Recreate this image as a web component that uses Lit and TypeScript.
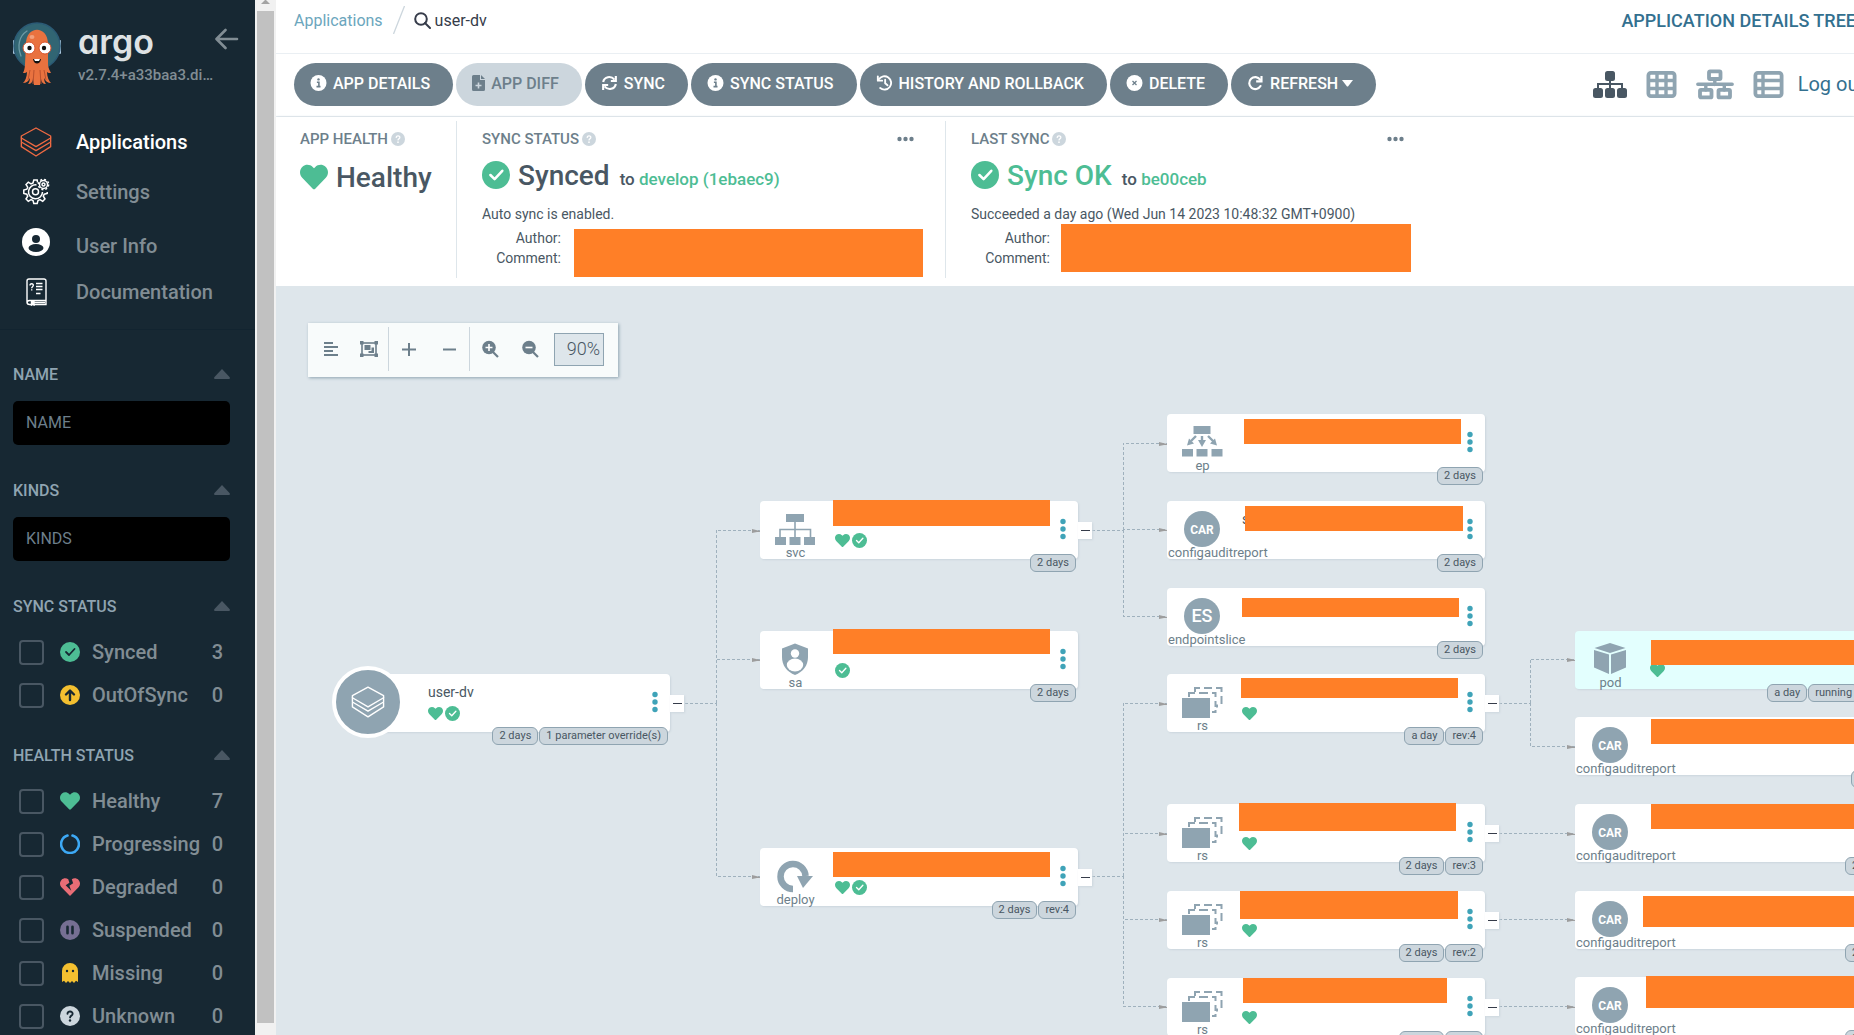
import { LitElement, html, css, svg, nothing } from "lit";
import { customElement } from "lit/decorators.js";
import { styleMap } from "lit/directives/style-map.js";

interface Cover { x: number; y: number; w: number; h: number; }
interface TreeNode {
  id: string; kind: string; icon: string; x: number; y: number;
  title?: string; health?: boolean; synced?: boolean; expandable?: boolean;
  live?: boolean; tags: string[]; cover?: Cover;
}

const NODES: TreeNode[] = [
  { id: "svc", kind: "svc", icon: "svc", x: 484, y: 215, health: true, synced: true, expandable: true, tags: ["2 days"], cover: { x: 73, y: -1, w: 217, h: 26 } },
  { id: "sa", kind: "sa", icon: "sa", x: 484, y: 345, synced: true, tags: ["2 days"], cover: { x: 73, y: -2, w: 217, h: 25 } },
  { id: "deploy", kind: "deploy", icon: "deploy", x: 484, y: 562, health: true, synced: true, expandable: true, tags: ["2 days", "rev:4"], cover: { x: 73, y: 4, w: 217, h: 25 } },
  { id: "ep", kind: "ep", icon: "ep", x: 891, y: 128, tags: ["2 days"], cover: { x: 77, y: 5, w: 217, h: 25 } },
  { id: "car", kind: "configauditreport", icon: "CAR", x: 891, y: 215, title: "s", tags: ["2 days"], cover: { x: 78, y: 5, w: 218, h: 25 } },
  { id: "es", kind: "endpointslice", icon: "ES", x: 891, y: 302, tags: ["2 days"], cover: { x: 75, y: 10, w: 217, h: 19 } },
  { id: "rs4", kind: "rs", icon: "rs", x: 891, y: 388, health: true, expandable: true, tags: ["a day", "rev:4"], cover: { x: 74, y: 4, w: 217, h: 20 } },
  { id: "rs3", kind: "rs", icon: "rs", x: 891, y: 518, health: true, expandable: true, tags: ["2 days", "rev:3"], cover: { x: 72, y: -1, w: 217, h: 28 } },
  { id: "rs2", kind: "rs", icon: "rs", x: 891, y: 605, health: true, expandable: true, tags: ["2 days", "rev:2"], cover: { x: 73, y: 0, w: 218, h: 28 } },
  { id: "rs1", kind: "rs", icon: "rs", x: 891, y: 692, health: true, expandable: true, tags: ["2 days", "rev:1"], cover: { x: 76, y: 0, w: 204, h: 25 } },
  { id: "pod", kind: "pod", icon: "pod", x: 1299, y: 345, live: true, health: true, tags: ["a day", "running", "1/1"], cover: { x: 76, y: 9, w: 217, h: 25 } },
  { id: "car4", kind: "configauditreport", icon: "CAR", x: 1299, y: 431, tags: ["a day"], cover: { x: 76, y: 2, w: 217, h: 25 } },
  { id: "car3", kind: "configauditreport", icon: "CAR", x: 1299, y: 518, tags: ["2 days"], cover: { x: 76, y: 0, w: 217, h: 25 } },
  { id: "car2", kind: "configauditreport", icon: "CAR", x: 1299, y: 605, tags: ["2 days"], cover: { x: 68, y: 5, w: 225, h: 31 } },
  { id: "car1", kind: "configauditreport", icon: "CAR", x: 1299, y: 691, tags: ["2 days"], cover: { x: 71, y: -1, w: 222, h: 32 } },
];

/* Each group: where the parent's line leaves, the shared vertical, and the child rows it reaches. */
const EDGES = [
  { from: 409, mid: 440, to: 484, y: 417, rows: [244, 373, 590] },
  { from: 816, mid: 847, to: 891, y: 244, rows: [157, 243, 330] },
  { from: 816, mid: 847, to: 891, y: 590, rows: [417, 547, 633, 720] },
  { from: 1223, mid: 1254, to: 1299, y: 417, rows: [373, 460] },
  { from: 1223, mid: 1254, to: 1299, y: 547, rows: [547] },
  { from: 1223, mid: 1254, to: 1299, y: 633, rows: [633] },
  { from: 1223, mid: 1254, to: 1299, y: 720, rows: [720] },
];

const HEART = "M462 63C407 16 326 24 276 76l-20 21-20-21C186 24 105 16 50 63c-63 53-66 150-10 208l193 199c13 13 33 13 46 0l193-199c56-58 53-155-10-208z";
const BROKEN = "M474 74l-3-3c-46-47-118-51-169-14l34 103-96 64 48 128-144-144 96-64-29-87C160 20 87 24 41 71l-3 3C-10 124-13 203 31 256l212 219c7 7 19 7 26 0l212-219c44-53 41-132-7-182z";

const stroked = (body: unknown, cls = "i20", w = 2) =>
  html`<svg class=${cls} viewBox="0 0 24 24" fill="none" stroke="currentColor" stroke-width=${w} stroke-linecap="round" stroke-linejoin="round" aria-hidden="true">${body}</svg>`;

const heart = (cls: string) => html`<svg class="${cls} green" viewBox="0 0 512 512" aria-hidden="true"><path fill="currentColor" d=${HEART} /></svg>`;
const check = (cls: string, mark: string) => html`<svg class="${cls} green" viewBox="0 0 20 20" aria-hidden="true"><circle cx="10" cy="10" r="10" fill="currentColor" /><path d="M6 10l3 3 5.500-6" fill="none" stroke=${mark} stroke-width="1.800" stroke-linecap="round" stroke-linejoin="round" /></svg>`;

const LAYERS = svg`<path d="M12 1.500L23 7.500v1.500l-11 6.500L1 9V7.500z"/><path d="M1 9v3l11 6.500L23 12V9"/><path d="M1 12.500v3L12 22.500l11-7v-3"/>`;

const statusIcon = (name: string) => {
  const dark = "#172833";
  switch (name) {
    case "Synced": return check("i20", dark);
    case "Healthy": return heart("i20");
    case "OutOfSync": return html`<svg class="i20" viewBox="0 0 20 20"><circle cx="10" cy="10" r="10" fill="#f4c030" /><path d="M10 15V6M6 9.500l4-4 4 4" fill="none" stroke=${dark} stroke-width="2.400" stroke-linecap="round" stroke-linejoin="round" /></svg>`;
    case "Progressing": return html`<svg class="i20" viewBox="0 0 20 20"><path d="M12.500 1.500a8.900 8.900 0 1 1-5 0" fill="none" stroke="#3da9f5" stroke-width="2.600" stroke-linecap="round" /></svg>`;
    case "Degraded": return html`<svg class="i20" viewBox="0 0 512 512"><path fill="#e96d76" d=${BROKEN} /></svg>`;
    case "Suspended": return html`<svg class="i20" viewBox="0 0 20 20"><circle cx="10" cy="10" r="10" fill="#766f94" /><path d="M7.500 6.800v6.400M12.500 6.800v6.400" stroke=${dark} stroke-width="2.600" stroke-linecap="round" /></svg>`;
    case "Missing": return html`<svg class="i20" viewBox="0 0 20 20"><path fill="#f4c030" d="M2 8a8 8 0 0 1 16 0v11l-2-1.200L14 20l-2-2-2 2-2-2-2 2-2-2.200L2 19z" /><circle cx="7" cy="8" r="1.200" fill=${dark} /><circle cx="13" cy="8" r="1.200" fill=${dark} /></svg>`;
    default: return html`<svg class="i20" viewBox="0 0 20 20"><circle cx="10" cy="10" r="10" fill="#ccd6dd" /><path d="M7.500 7.800C7.500 4.500 12.800 4.800 12.600 8c-.1 1.600-2.500 1.700-2.500 3.400" fill="none" stroke=${dark} stroke-width="1.900" stroke-linecap="round" /><circle cx="10" cy="14.500" r="1.200" fill=${dark} /></svg>`;
  }
};

const INFO = html`<svg class="i17" viewBox="0 0 20 20" aria-hidden="true"><circle cx="10" cy="10" r="10" fill="#fff" /><circle cx="10" cy="5.500" r="1.500" fill="#6d7f8b" /><path d="M8 9h2.500v5M7.500 14.500h5" fill="none" stroke="#6d7f8b" stroke-width="2" /></svg>`;
const HELP = html`<svg class="i14" viewBox="0 0 20 20" aria-hidden="true"><circle cx="10" cy="10" r="10" fill="#ccd6dd" /><path d="M7.500 7.800C7.500 4.500 12.800 4.800 12.600 8c-.1 1.600-2.500 1.700-2.500 3.400" fill="none" stroke="#fff" stroke-width="1.800" stroke-linecap="round" /><circle cx="10" cy="14.500" r="1.200" fill="#fff" /></svg>`;

const ACTIONS = [
  { label: "APP DETAILS", icon: INFO },
  { label: "APP DIFF", disabled: true, icon: html`<svg class="i13" viewBox="0 0 13 16" aria-hidden="true"><path fill="currentColor" d="M1.500 0H8v5h5v9.500a1.500 1.500 0 0 1-1.500 1.500h-10A1.500 1.500 0 0 1 0 14.500v-13A1.500 1.500 0 0 1 1.500 0zM9 0l4 4H9z" /><path d="M6.500 7.500v6M3.500 10.500h6" stroke="#ccd6dd" stroke-width="1.600" /></svg>` },
  { label: "SYNC", icon: html`<svg class="i17" viewBox="0 0 24 24" fill="none" stroke="#fff" stroke-width="3.200" aria-hidden="true"><path d="M2.500 10.500C4 2.500 14 .5 19.500 7M21.500 13.500C20 21.500 10 23.500 4.500 17" /><path d="M21.500 1.500V9H14M2.500 22.500V15H10" /></svg>` },
  { label: "SYNC STATUS", icon: INFO },
  { label: "HISTORY AND ROLLBACK", icon: html`<svg class="i17" viewBox="0 0 24 24" fill="none" stroke="#fff" stroke-width="2.800" stroke-linecap="round" stroke-linejoin="round" aria-hidden="true"><path d="M3.500 6.500a10 10 0 1 1 2 13" /><path d="M2 2v6.500h6.500M13 7v5.500l3.500 3" /></svg>` },
  { label: "DELETE", icon: html`<svg class="i17" viewBox="0 0 20 20" aria-hidden="true"><circle cx="10" cy="10" r="10" fill="#fff" /><path d="M7.500 7.500l5 5M12.500 7.500l-5 5" stroke="#6d7f8b" stroke-width="1.600" /></svg>` },
  { label: "REFRESH", caret: true, icon: html`<svg class="i17" viewBox="0 0 24 24" fill="none" stroke="#fff" stroke-width="3.200" aria-hidden="true"><path d="M19.500 16.500A9 9 0 1 1 19 7" stroke-linecap="round" /><path d="M21 1.500V9.500H13" /></svg>` },
];

const kindIcon = (icon: string) => {
  const g = "#8fa4b1";
  switch (icon) {
    case "svc": return html`<svg class="kind-icon" viewBox="0 0 42 34"><g fill=${g}><path d="M12 2h18v8H12zM1 25h11v8H1zM15.500 25h11v8h-11zM30 25h11v8H30z" /></g><path d="M21 10v15M6 25v-7.500h30.500V25" fill="none" stroke=${g} stroke-width="1.600" /></svg>`;
    case "sa": return html`<svg class="kind-icon" viewBox="0 0 42 34"><path fill=${g} d="M21 1.500L34 6.500V15c0 8.500-5 15-13 18-8-3-13-9.500-13-18V6.500z" /><circle cx="21" cy="11.500" r="4.200" fill="#fff" /><ellipse cx="21" cy="23" rx="8.200" ry="6.500" fill="#fff" /></svg>`;
    case "deploy": return html`<svg class="kind-icon" viewBox="0 0 42 34"><path d="M19 30A12.500 12.500 0 1 1 31.500 17" fill="none" stroke=${g} stroke-width="6.500" /><path fill=${g} d="M23 17h16L29 29z" /></svg>`;
    case "ep": return html`<svg class="kind-icon" viewBox="0 0 42 34"><g fill=${g}><path d="M12.500 1h17v8h-17zM1 24h11v7.500H1zM15.500 24h11v7.500h-11zM30.500 24h11v7.500h-11z" /><path d="M21 22l-4-7h8zM6 20.500l2-7 5 5zM36 20.500l-7-2 5-5z" /></g><path d="M21 11v5M15 11l-5 5M27 11l6 6" stroke=${g} stroke-width="2.400" /></svg>`;
    case "rs": return html`<svg class="kind-icon" viewBox="0 0 42 34"><path fill=${g} d="M1 13h28v20H1z" /><g fill="none" stroke=${g} stroke-width="2"><path d="M8 12V8h6M18 8h9M31 8h3.500v4M34.500 16v6M34.500 25v2H31" /><path d="M14 7V3h5M23 3h8M35 3h5.500v4M40.500 11v8M36 22.500v-3" /></g></svg>`;
    case "pod": return html`<svg class="kind-icon" viewBox="0 0 42 34"><g fill=${g}><path d="M21 1l15.500 5L21 11 5.500 6zM5 8l15 4.500V32L5 25.500zM37 8l-15 4.500V32l15-6.500z" /></g></svg>`;
    default: return html`<span class="kind-badge ${icon.length > 2 ? "small" : ""}">${icon}</span>`;
  }
};

@customElement("app-root")
export class AppRoot extends LitElement {
  static styles = css`
    :host { display: block; font-family: Roboto, "Liberation Sans", sans-serif; color: #495763; }
    * { box-sizing: border-box; }
    svg { display: block; flex: none; }
    a { text-decoration: none; color: inherit; }
    button { font: inherit; color: inherit; border: 0; background: none; padding: 0; cursor: pointer; }
    .app { display: flex; height: 100vh; overflow: hidden; background: #fff; }
    .green { color: #4dbd94; }
    .i14 { width: 14px; height: 14px; }
    .i13 { width: 13px; height: 16px; }
    .i17 { width: 17px; height: 16px; }
    .i20 { width: 20px; height: 20px; }
    .i26 { width: 28px; height: 28px; }
    .i30 { width: 32px; height: 32px; }

    .sidebar { width: 255px; flex: none; background: #172833; color: #818d94; overflow: hidden; }
    .brand { display: flex; padding: 20px 16px 0 12px; height: 117px; }
    .squid { width: 50px; height: 66px; }
    .brand-text { flex: 1; min-width: 0; margin-left: 16px; position: relative; }
    .wordmark { font: 600 34px/40px Inter, sans-serif; font-feature-settings: "cv11"; color: #dee2e4; height: 44px; margin-top: 2px; }
    .version { font-size: 15px; font-weight: 500; line-height: 18px; width: 136px; overflow: hidden; text-overflow: ellipsis; white-space: nowrap; }
    .collapse { display: block; height: 24px; margin-top: 7px; margin-left: -60px; position: relative; }
    .nav { display: flex; flex-direction: column; border-bottom: 1px solid #122430; height: 213px; }
    .nav-item { display: grid; grid-template-columns: 32px 1fr; column-gap: 24px; align-items: center; height: 50px; padding-left: 20px; font-size: 20px; font-weight: 500; }
    .nav-item svg { justify-self: center; color: #fff; }
    .nav-item.active { color: #fff; }
    .nav-item.active svg { color: #ef6a42; }
    .nav-item.glyph { align-items: start; padding-top: 11px; }
    .nav-item.glyph span { line-height: 36px; }
    .filters { padding: 32px 25px 0 13px; }
    .filter-head { display: flex; justify-content: space-between; align-items: center; width: 100%; height: 24px; font-size: 16px; font-weight: 500; color: #8fa4b1; }
    .caret { width: 16px; height: 10px; color: #495763; }
    .filter-input { display: block; width: 100%; height: 44px; margin: 15px 0 33px; padding: 0 13px 2px; border: 0; border-radius: 5px; background: #000; color: #8fa4b1; font: 400 16px Roboto, sans-serif; }
    .filter-input::placeholder { color: #6d7f8b; opacity: 1; }
    .checks { padding: 12px 7px 27px 6px; }
    .check { display: flex; align-items: center; height: 43px; font-size: 20px; font-weight: 500; }
    .check input { appearance: none; flex: none; width: 25px; height: 25px; margin: 2px 16px 0 0; border: 2px solid #495763; border-radius: 4px; }
    .check .name { flex: 1; padding-left: 12px; }

    .scrollbar { flex: none; width: 21px; background: #f1f1f1; display: flex; flex-direction: column; align-items: center; gap: 7px; padding-bottom: 12px; }
    .scrollbar svg { width: 9px; height: 4px; }
    .thumb { width: 17px; flex: 1; background: #c1c1c1; }

    .main { flex: 1; min-width: 0; overflow: hidden; display: flex; flex-direction: column; }
    .header, .toolbar { display: flex; align-items: center; justify-content: space-between; flex: none; margin-right: -28px; border-bottom: 1px solid #eaeff3; }
    .header { height: 54px; padding: 0 26px 13px 18px; }
    .crumbs { display: flex; align-items: center; font-size: 16px; color: #363c4a; }
    .crumbs a { color: #6ba6bd; }
    .slash { width: 12px; height: 28px; margin: 0 9px 0 10px; color: #ccd6dd; }
    .crumbs .search { width: 17px; height: 17px; margin-right: 4px; }
    .page-title { font-size: 18px; font-weight: 500; color: #33708f; white-space: nowrap; }
    .toolbar { height: 63px; padding: 0 17px 2px 18px; }
    .actions { display: flex; gap: 3px; }
    .action { display: flex; align-items: center; gap: 6px; height: 43px; padding: 0 23px 2px 16px; border-radius: 22px; background: #6d7f8b; color: #fff; font-size: 16px; font-weight: 500; white-space: nowrap; }
    .action:disabled { background: #ccd6dd; color: #6d7f8b; }
    .action .down { width: 11px; height: 7px; margin-left: -2px; }
    .views { display: flex; align-items: center; color: #8fa4b1; }
    .views button { margin-right: 19px; }
    .views button:nth-child(4) { margin-right: 14px; }
    .views svg { height: 31px; }
    .tree { width: 34px; color: #495763; }
    .grid { width: 31px; }
    .net { width: 38px; }
    .list { width: 31px; }
    .logout { font-size: 20px; color: #33708f; white-space: nowrap; }

    .status { display: flex; flex: none; height: 169px; padding: 4px 0 8px; box-shadow: 0 1px 3px #9fb0ba; position: relative; }
    .panel { position: relative; padding: 8px 31px 0 25px; border-right: 1px solid #dee6eb; }
    .panel:first-child { width: 181px; padding: 8px 0 0 24px; }
    .panel.wide { width: 489px; }
    .panel:last-child { border-right: 0; }
    .panel-title { display: flex; align-items: center; gap: 3px; height: 20px; font-size: 15px; font-weight: 500; color: #6d7f8b; }
    .more { margin-left: auto; width: 17px; height: 20px; }
    .big { display: flex; align-items: center; gap: 8px; height: 36px; margin: 10px 0 9px; font-size: 28px; font-weight: 500; }
    .big.tight { align-items: baseline; }
    .big.tight svg { align-self: flex-start; margin-top: 2px; }
    .rev { font-size: 17px; margin-left: 2px; white-space: nowrap; }
    .note { font-size: 14px; line-height: 20px; white-space: nowrap; }
    .meta { display: grid; grid-template-columns: 79px; margin: 4px 0 0; font-size: 14px; line-height: 20px; text-align: right; }
    .cover { position: absolute; background: #ff7f27; }

    .canvas { position: relative; flex: 1; background: #dee6eb; overflow: hidden; }
    .zoom { position: absolute; left: 32px; top: 37px; display: flex; align-items: center; height: 54px; padding: 0 14px 2px 4px; background: #f8fbfb; box-shadow: 1px 1px 3px #8fa4b1; color: #6d7f8b; }
    .zoom button { width: 40px; display: grid; place-items: center; }
    .zoom .first { width: 38px; }
    .zoom .sep { align-self: stretch; border-left: 1px solid #ccd6dd; margin: 4px 0; }
    .zoom svg { width: 18px; height: 18px; }
    .zoom input { width: 50px; height: 33px; margin-left: 4px; padding: 0 3px 2px; border: 1px solid #8fa4b1; border-radius: 0; background: #dee6eb; color: #495763; font: 300 18px Roboto, sans-serif; text-align: right; }
    .edges { position: absolute; inset: 0; width: 100%; height: 100%; }
    .node { position: absolute; width: 318px; height: 58px; border-radius: 4px; background: #fff; box-shadow: 1px 1px 2px #ccd6dd; font-size: 14px; }
    .node.live { background: #e3fffe; }
    .node.root { width: 302px; }
    .kind { position: absolute; left: 1px; top: 11px; min-width: 69px; display: flex; flex-direction: column; }
    .kind-icon { width: 42px; height: 34px; align-self: flex-start; margin-left: 13px; }
    .kind-badge { width: 36px; height: 36px; margin: -1px 0 -1px 16px; border-radius: 50%; background: #8fa4b1; color: #fff; font-size: 18px; font-weight: 500; line-height: 36px; text-align: center; }
    .kind-badge.small { font-size: 12px; line-height: 38px; font-weight: 700; }
    .kind-label { font-size: 13px; line-height: 14px; color: #6d7f8b; text-align: center; }
    .root-icon { position: absolute; left: -36px; top: -8px; width: 72px; height: 72px; border: 4px solid #fff; border-radius: 50%; background: #8fa4b1; color: #fff; display: grid; place-items: center; }
    .root-icon svg { width: 34px; height: 34px; }
    .body { position: absolute; left: 75px; top: 9px; }
    .root .body { left: 60px; }
    .node-title { height: 22px; line-height: 18px; }
    .marks { display: flex; gap: 2px; height: 16px; align-items: center; }
    .marks svg { width: 15px; height: 15px; }
    .dots { position: absolute; right: 12px; top: 17px; width: 6px; height: 22px; }
    .dots svg { width: 6px; height: 22px; }
    .tags { position: absolute; right: 2px; bottom: -13px; display: flex; gap: 1px; }
    .tag { height: 18px; padding: 0 6px; border: 1px solid #8fa4b1; border-radius: 6px; background: #ccd6dd; color: #495763; font-size: 11px; line-height: 16px; white-space: nowrap; }
    .toggle { position: absolute; left: 100%; top: 21px; width: 14px; height: 17px; background: #fff; box-shadow: 1px 1px 2px #ccd6dd; display: grid; place-items: center; }
    .toggle::before { content: ""; width: 9px; height: 1px; background: #363c4a; }
  `;

  private filterHead(label: string) {
    return html`<button class="filter-head">${label}<svg class="caret" viewBox="0 0 16 10" aria-hidden="true"><path fill="currentColor" d="M8 0l7.500 8c.8 1 .3 2-.8 2H1.300C.2 10-.3 9 .5 8z" /></svg></button>`;
  }

  private checks(rows: [string, number][]) {
    return html`<div class="checks">${rows.map(([name, count]) => html`
      <label class="check"><input type="checkbox" />${statusIcon(name)}<span class="name">${name}</span><span>${count}</span></label>`)}</div>`;
  }

  private cover(c: Cover) {
    return html`<div class="cover" style=${styleMap({ left: `${c.x}px`, top: `${c.y}px`, width: `${c.w}px`, height: `${c.h}px` })}></div>`;
  }

  private nodeParts(n: Partial<TreeNode>) {
    return html`
      <div class="body"><div class="node-title">${n.title ?? nothing}</div>
        <div class="marks">${n.health ? heart("") : nothing}${n.synced ? check("", "#fff") : nothing}</div></div>
      <button class="dots" aria-label="Node actions"><svg viewBox="0 0 6 22"><g fill="#3fa3b8"><circle cx="3" cy="3.500" r="2.700" /><circle cx="3" cy="11" r="2.700" /><circle cx="3" cy="18.500" r="2.700" /></g></svg></button>
      <div class="tags">${n.tags?.map((t) => html`<span class="tag">${t}</span>`)}</div>
      ${n.expandable ? html`<button class="toggle" aria-label="Collapse"></button>` : nothing}
      ${n.cover ? this.cover(n.cover) : nothing}`;
  }

  private more() {
    return html`<button class="more" aria-label="More"><svg width="17" height="20" viewBox="0 0 17 20"><g fill="#6d7f8b"><circle cx="2.500" cy="10" r="2.200" /><circle cx="8.500" cy="10" r="2.200" /><circle cx="14.500" cy="10" r="2.200" /></g></svg></button>`;
  }

  private sidebar() {
    return html`<aside class="sidebar">
      <div class="brand">
        <svg class="squid" viewBox="0 0 50 66" aria-hidden="true">
          <rect x="1" y="20" width="4" height="14" rx="1" fill="#a9c6dd" /><rect x="45" y="20" width="4" height="14" rx="1" fill="#a9c6dd" />
          <circle cx="25" cy="26" r="23" fill="#316573" stroke="#2b5a75" stroke-width="1.500" />
          <path d="M9 36C5 26 7 16 15 11" fill="none" stroke="#6d9aa5" stroke-width="1.300" stroke-linecap="round" />
          <path fill="#e9723f" d="M14 24c0-19 22-19 22 0v20c0 4 2 7 3 9-2 0-3 0-4-1 0 5 2 9 4 11-3 0-6-2-7-5 0 2 1 5 2 6-3 0-5-2-5-6l-1 7c-2 0-2 0-3 0s-2 0-3 0l-1-7c0 4-2 6-5 6 1-1 2-4 2-6-1 3-4 5-7 5 2-2 4-6 4-11-1 1-3 1-4 1 1-2 2-5 2-9z" />
          <path d="M18 50l-2 10M22 50l-1 14M28 50l1 14M32 50l2 10" stroke="#b9502d" stroke-width="1" fill="none" />
          <ellipse cx="20" cy="17" rx="2.500" ry="2" fill="#f1a07c" />
          <circle cx="17" cy="28" r="6" fill="#fff" stroke="#d9522b" /><circle cx="33" cy="28" r="6" fill="#fff" stroke="#d9522b" />
          <circle cx="17.500" cy="28" r="2.200" fill="#111" /><circle cx="32" cy="28" r="2.200" fill="#111" />
          <path d="M21 39h8c-1 6-7 6-8 0z" fill="#111" /><path d="M22 39h6l-1 2h-4z" fill="#fff" />
        </svg>
        <div class="brand-text"><div class="wordmark">argo</div><div class="version">v2.7.4+a33baa3.dirty</div></div>
        <button class="collapse" aria-label="Collapse sidebar"><svg width="24" height="24" viewBox="0 0 24 24" fill="none" stroke="#818d94" stroke-width="2.600" stroke-linecap="round" stroke-linejoin="round"><path d="M22 12H2M10.500 3L1.500 12l9 9" /></svg></button>
      </div>
      <nav class="nav">
        <a class="nav-item active" href="#applications">${stroked(LAYERS, "i30", 1)}<span>Applications</span></a>
        <a class="nav-item" href="#settings">
          <svg class="i26" viewBox="0 0 28 28" fill="none" stroke="currentColor" stroke-width="1.500" aria-hidden="true">
            <path d="M15.500 4.500l-.3-2.500h-3.400l-.8 3-2 .9-2.700-1.700-2.300 2.300L5.700 9.200l-.9 2-3 .8v3.400l3 .8.9 2L4 21l2.300 2.300L9 21.600l2 .9.800 3h3.400l.8-3 2-.9 2.700 1.700L23 21l-1.700-2.800.9-2 3-.8v-1.400" />
            <circle cx="13.500" cy="13.800" r="3" /><path d="M20.500 14A7 7 0 1 1 14.500 6.900" />
            <circle cx="21.500" cy="6.500" r="1.500" /><circle cx="21.500" cy="6.500" r="4" /><circle cx="21.500" cy="6.500" r="5.200" stroke-dasharray="2 2.080" stroke-width="1.400" />
          </svg><span>Settings</span></a>
        <a class="nav-item glyph" href="#user-info">
          <svg class="i26" viewBox="0 0 28 28" aria-hidden="true"><circle cx="14" cy="14" r="14" fill="currentColor" /><circle cx="14" cy="11" r="4" fill="#172833" /><ellipse cx="14" cy="20" rx="7.500" ry="4" fill="#172833" /></svg><span>User Info</span></a>
        <a class="nav-item" href="#documentation">
          <svg class="i26" viewBox="0 0 28 28" fill="none" stroke="currentColor" stroke-width="1.400" aria-hidden="true">
            <path d="M9 22.500h15V3a2 2 0 0 0-2-2H7a2 2 0 0 0-2 2v21a2.500 2.500 0 0 0 2.500 2.500H24v-4M9 22.500H7.500A2.500 2.500 0 0 0 5 25M12 24.500h11" />
            <path d="M8 7.500c0-2.500 3.600-2.300 3.300 0-.2 1.300-1.600 1.200-1.600 2.800M9.700 11.300v1.300M14 5.500h6.500M14 8.500h6.500M14 11.500h6.500M14 15.500h4.500" /><path d="M9.500 23v4l1.200-.8 1.300.8v-4z" fill="currentColor" />
          </svg><span>Documentation</span></a>
      </nav>
      <div class="filters">
        ${this.filterHead("NAME")}<input class="filter-input" aria-label="Name" placeholder="NAME" />
        ${this.filterHead("KINDS")}<input class="filter-input" aria-label="Kinds" placeholder="KINDS" />
        ${this.filterHead("SYNC STATUS")}${this.checks([["Synced", 3], ["OutOfSync", 0]])}
        ${this.filterHead("HEALTH STATUS")}${this.checks([["Healthy", 7], ["Progressing", 0], ["Degraded", 0], ["Suspended", 0], ["Missing", 0], ["Unknown", 0]])}
      </div>
    </aside>`;
  }

  private edges() {
    return html`<svg class="edges" aria-hidden="true"><g stroke="#9fb1bd" stroke-dasharray="3 2" fill="none" shape-rendering="crispEdges">
      ${EDGES.map((e) => svg`<path d=${`M${e.from} ${e.y}H${e.mid}`} />${e.rows.map((r) => svg`<path d=${`M${e.mid} ${e.y}V${r}H${e.to}`} />`)}`)}
      </g><g fill="#9d9d9d">${EDGES.map((e) => e.rows.map((r) => svg`<path d=${`M${e.to - 8} ${r - 1}l8 2v1h-3l-5 1z`} />`))}</g></svg>`;
  }

  render() {
    return html`<div class="app">
      ${this.sidebar()}
      <div class="scrollbar"><svg viewBox="0 0 9 4"><path fill="#a3a3a3" d="M4 0h1l4 4H0z" /></svg><div class="thumb"></div></div>
      <main class="main">
        <header class="header">
          <div class="crumbs"><a href="#applications">Applications</a>
            <svg class="slash" viewBox="0 0 12 28"><path d="M11.500 0L.5 28" stroke="currentColor" stroke-width="1.300" /></svg>
            <svg class="search" viewBox="0 0 17 17" fill="none" stroke="currentColor" stroke-width="2"><circle cx="7" cy="7" r="5.800" /><path d="M11 11l5 5" stroke-linecap="round" /></svg>user-dv</div>
          <div class="page-title">APPLICATION DETAILS TREE</div>
        </header>
        <div class="toolbar">
          <div class="actions">${ACTIONS.map((a) => html`<button class="action" ?disabled=${a.disabled}>${a.icon}<span>${a.label}</span>${a.caret ? html`<svg class="down" viewBox="0 0 11 7"><path fill="#fff" d="M0 0h11L6 6.500H5z" /></svg>` : nothing}</button>`)}</div>
          <div class="views">
            <button aria-label="Tree"><svg class="tree" viewBox="0 0 34 31"><g fill="currentColor"><rect x="12" y="2" width="10" height="10" rx="2.500" /><rect x="0" y="19" width="10" height="10" rx="2.500" /><rect x="12" y="19" width="10" height="10" rx="2.500" /><rect x="24" y="19" width="10" height="10" rx="2.500" /></g><path d="M17 10v10M5 20v-5h24v5" fill="none" stroke="currentColor" stroke-width="2" /></svg></button>
            <button aria-label="Pods"><svg class="grid" viewBox="0 0 31 31" fill="none" stroke="currentColor" stroke-width="3.800"><rect x="2.400" y="3.900" width="26.200" height="23.200" rx="2.500" /><path d="M11 4v23M20 4v23M2 11.500h27M2 19.500h27" stroke-width="3.400" /></svg></button>
            <button aria-label="Network"><svg class="net" viewBox="0 0 38 31" fill="none" stroke="currentColor" stroke-width="3.800"><rect x="13" y="2.400" width="11.500" height="7.600" rx="1" /><rect x="4" y="20.800" width="11.500" height="7.600" rx="1" /><rect x="22.500" y="20.800" width="11.500" height="7.600" rx="1" /><path d="M1.800 15.300h34.400M18.800 10v5.500M9.800 15.500V21M28.300 15.500V21" stroke-width="3.400" stroke-linecap="round" /></svg></button>
            <button aria-label="List"><svg class="list" viewBox="0 0 31 31" fill="none" stroke="currentColor" stroke-width="3.800"><rect x="2.400" y="3.900" width="26.200" height="23.200" rx="2.500" /><path d="M10 4v23M2 11.500h27M2 19.500h27" stroke-width="3.400" /></svg></button>
            <a class="logout" href="#logout">Log out</a>
          </div>
        </div>
        <section class="status">
          <div class="panel"><div class="panel-title">APP HEALTH${HELP}</div><div class="big">${heart("i26")}<span>Healthy</span></div></div>
          <div class="panel wide"><div class="panel-title">SYNC STATUS${HELP}${this.more()}</div>
            <div class="big tight">${check("i26", "#fff")}<span>Synced</span><span class="rev">to <a class="green" href="#develop">develop (1ebaec9)</a></span></div>
            <div class="note">Auto sync is enabled.</div>
            <div class="meta"><span>Author:</span><span>Comment:</span></div>${this.cover({ x: 117, y: 108, w: 349, h: 48 })}</div>
          <div class="panel wide"><div class="panel-title">LAST SYNC${HELP}${this.more()}</div>
            <div class="big tight">${check("i26", "#fff")}<span class="green">Sync OK</span><span class="rev">to <a class="green" href="#be00ceb">be00ceb</a></span></div>
            <div class="note">Succeeded a day ago (Wed Jun 14 2023 10:48:32 GMT+0900)</div>
            <div class="meta"><span>Author:</span><span>Comment:</span></div>${this.cover({ x: 115, y: 103, w: 350, h: 48 })}</div>
        </section>
        <section class="canvas">
          ${this.edges()}
          <div class="zoom">
            <button class="first" aria-label="Align"><svg viewBox="0 0 18 18" stroke="currentColor" stroke-width="2"><path d="M2 3h9M2 7h14M2 11h9M2 15h14" /></svg></button>
            <button class="first" aria-label="Group"><svg viewBox="0 0 18 18"><rect x="2" y="3" width="14" height="12" fill="none" stroke="currentColor" stroke-width="1.600" /><path fill="currentColor" d="M0 1h3.500v3.500H0zM14.500 1H18v3.500h-3.500zM0 13.500h3.500V17H0zM14.500 13.500H18V17h-3.500zM4.500 5h6v5h-6zM11.500 7.500H14V13H8.500v-2h3z" /></svg></button>
            <span class="sep"></span>
            <button aria-label="Expand all"><svg viewBox="0 0 18 18" stroke="currentColor" stroke-width="2"><path d="M9 3v13M2 9.500h14" /></svg></button>
            <button aria-label="Collapse all"><svg viewBox="0 0 18 18" stroke="currentColor" stroke-width="2"><path d="M3 9.500h13" /></svg></button>
            <span class="sep"></span>
            <button aria-label="Zoom in"><svg viewBox="0 0 18 18"><circle cx="8" cy="7.500" r="6.800" fill="currentColor" /><path d="M12 12l5 5" stroke="currentColor" stroke-width="2.200" /><path d="M8 4v7M4.500 7.500h7" stroke="#fff" stroke-width="1.600" /></svg></button>
            <button aria-label="Zoom out"><svg viewBox="0 0 18 18"><circle cx="8" cy="7.500" r="6.800" fill="currentColor" /><path d="M12 12l5 5" stroke="currentColor" stroke-width="2.200" /><path d="M4.500 7.500h7" stroke="#fff" stroke-width="1.600" /></svg></button>
            <input aria-label="Zoom level" value="90%" />
          </div>
          <div class="node root" style=${styleMap({ left: "92px", top: "388px" })}>
            <div class="root-icon">${stroked(LAYERS, "", 1)}</div>
            ${this.nodeParts({ title: "user-dv", health: true, synced: true, expandable: true, tags: ["2 days", "1 parameter override(s)"] })}
          </div>
          ${NODES.map((n) => html`<div class="node ${n.live ? "live" : ""}" style=${styleMap({ left: `${n.x}px`, top: `${n.y}px` })}>
            <div class="kind">${kindIcon(n.icon)}<span class="kind-label">${n.kind}</span></div>${this.nodeParts(n)}</div>`)}
        </section>
      </main>
    </div>`;
  }
}
